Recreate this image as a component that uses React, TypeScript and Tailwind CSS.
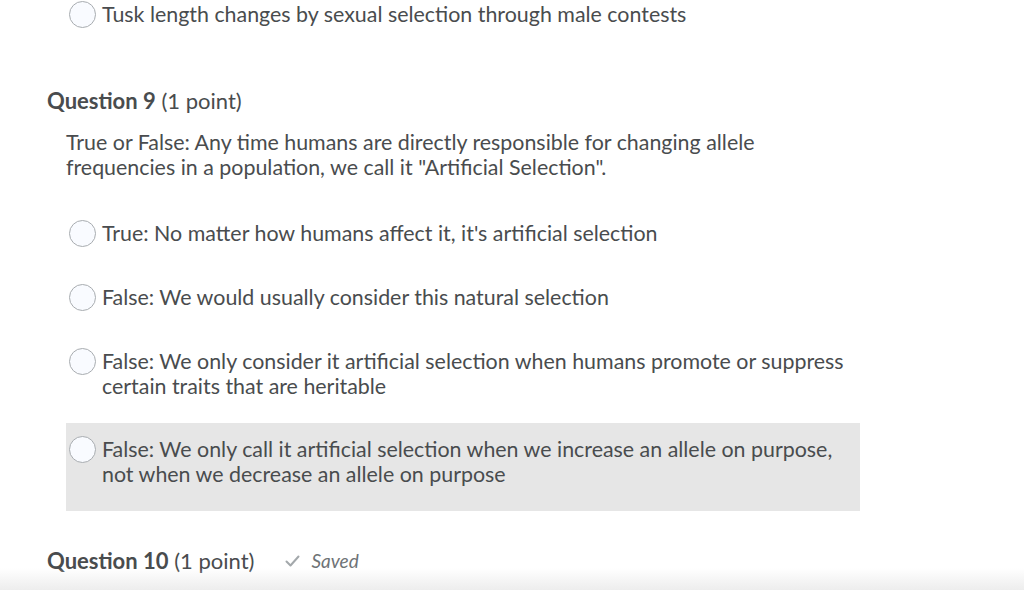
import React from 'react';

const font = { fontFamily: 'Lato, "Noto Sans", sans-serif' };

function Radio() {
  return (
    <span className="mt-[-1px] h-[27px] w-[27px] shrink-0 rounded-full border border-[#a8acb0] bg-[#f9fbff]" />
  );
}

function Option({ text, highlight, first }: { text: React.ReactNode; highlight?: boolean; first?: boolean }) {
  return (
    <div
      className={`flex items-start gap-[6px] pl-[3px] pr-4 ${first ? 'pt-[2px] pb-[25px]' : 'pt-[14px] pb-[24px]'} ${highlight ? 'bg-[#e6e6e6]' : ''}`}
    >
      <Radio />
      <div className="whitespace-nowrap text-[21.4px] leading-[25px] text-[#494c4e]">{text}</div>
    </div>
  );
}

export default function App() {
  return (
    <div className="relative h-[590px] w-[1024px] overflow-hidden bg-white" style={font}>
      <div className="w-[794px] pl-[66px] box-content">
        <Option first text="Tusk length changes by sexual selection through male contests" />
      </div>

      <div className="mt-[35px] pl-[47px] text-[22px] leading-[25px] text-[#494c4e]">
        <span className="font-bold">Question 9</span> (1 point)
      </div>

      <div className="mt-[17px] pl-[66px] text-[21.4px] leading-[25px] text-[#494c4e]">
        True or False: Any time humans are directly responsible for changing allele
        <br />
        frequencies in a population, we call it "Artificial Selection".
      </div>

      <div className="mt-[27px] ml-[66px] w-[794px]">
        <Option text="True: No matter how humans affect it, it's artificial selection" />
        <Option text="False: We would usually consider this natural selection" />
        <Option
          text={
            <>
              False: We only consider it artificial selection when humans promote or suppress
              <br />
              certain traits that are heritable
            </>
          }
        />
        <Option
          highlight
          text={
            <>
              False: We only call it artificial selection when we increase an allele on purpose,
              <br />
              not when we decrease an allele on purpose
            </>
          }
        />
      </div>

      <div className="mt-[37px] flex items-center pl-[47px] text-[22px] leading-[25px] text-[#494c4e]">
        <span>
          <span className="font-bold">Question 10</span> (1 point)
        </span>
        <span className="ml-[31px] flex items-center gap-[11px] text-[19px] italic text-[#6e7376]">
          <svg width="15" height="12" viewBox="0 0 15 12" fill="none">
            <path d="M1.5 6.5 L5.5 10.5 L13.5 1.5" stroke="#a3a8ab" strokeWidth="2" strokeLinecap="round" strokeLinejoin="round" />
          </svg>
          Saved
        </span>
      </div>

      <div className="pointer-events-none absolute bottom-0 left-0 h-[22px] w-full bg-gradient-to-b from-white/0 to-[#ededed]" />
    </div>
  );
}
